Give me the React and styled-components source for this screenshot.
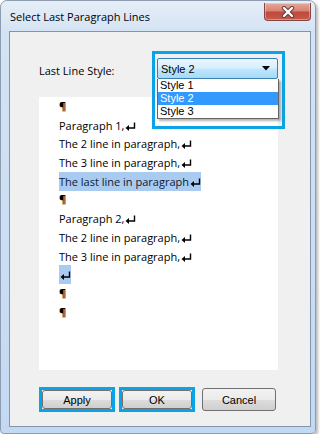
import React from "react";
import styled, { createGlobalStyle } from "styled-components";

const GlobalStyle = createGlobalStyle`
  html, body {
    margin: 0;
    padding: 0;
    background: #ffffff;
  }
`;

const uiFont = `"Open Sans", "Noto Sans", sans-serif`;
const classicFont = `"Liberation Sans", Arial, sans-serif`;

const Window = styled.div`
  box-sizing: border-box;
  width: 316px;
  height: 434px;
  display: flex;
  flex-direction: column;
  border: 1px solid #8d9cb0;
  border-radius: 7px 7px 4px 4px;
  background: linear-gradient(#e6eef8 0, #d4e3f4 30px, #c3d9f2 100%);
  box-shadow: 2px 2px 3px rgba(0, 0, 0, 0.28);
`;

const TitleBar = styled.div`
  height: 30px;
  display: flex;
  align-items: flex-start;
  justify-content: space-between;
  padding: 0 4px 0 9px;
`;

const Title = styled.span`
  font-family: ${uiFont};
  font-size: 11px;
  color: #000;
  line-height: 15px;
  margin-top: 8px;
`;

const CloseButton = styled.div`
  width: 47px;
  height: 18px;
  margin-top: 2px;
  display: flex;
  align-items: center;
  justify-content: center;
  box-sizing: border-box;
  border: 1px solid #83453d;
  border-top: none;
  border-radius: 0 0 4px 4px;
  background: linear-gradient(#e7a89b 0%, #d88574 45%, #c0493d 55%, #c75b4c 100%);
  box-shadow: inset 0 0 0 1px rgba(255, 255, 255, 0.35);
`;

const Client = styled.div`
  flex: 1;
  margin: 0 4px 6px 8px;
  border: 1px solid #8196ae;
  background: #f0f0f0;
  padding: 19px 0 0 29px;
  display: flex;
  flex-direction: column;
`;

const StyleRow = styled.div`
  display: flex;
  height: 30px;
`;

const Label = styled.span`
  width: 113px;
  font-family: ${uiFont};
  font-size: 11px;
  line-height: 15px;
  margin-top: 12px;
  color: #000;
`;

const ComboAnchor = styled.div`
  position: relative;
  width: 133px;
`;

const Callout = styled.div`
  position: absolute;
  top: 0;
  left: 0;
  z-index: 2;
  box-sizing: border-box;
  width: 133px;
  height: 78px;
  border: 3px solid #0aa3e5;
  padding: 4px 4px 0 2px;
`;

const Select = styled.div`
  box-sizing: border-box;
  width: 121px;
  height: 21px;
  display: flex;
  align-items: center;
  justify-content: space-between;
  padding: 0 7px 0 3px;
  border: 1px solid #3c7fb1;
  border-radius: 2px;
  background: linear-gradient(#eaf6fd 0%, #d9f0fc 45%, #bee6fd 55%, #a7d9f5 100%);
  font-family: ${classicFont};
  font-size: 11px;
  color: #000;
`;

const List = styled.div`
  box-sizing: border-box;
  width: 122px;
  border: 1px solid #646464;
  border-top: none;
  background: #fff;
  box-shadow: 2px 2px 2px rgba(0, 0, 0, 0.3);
`;

const Option = styled.div`
  height: 13px;
  line-height: 13px;
  padding-left: 2px;
  font-family: ${classicFont};
  font-size: 11px;
  color: ${(p) => (p.$selected ? "#fff" : "#000")};
  background: ${(p) => (p.$selected ? "#3399ff" : "transparent")};
`;

const Preview = styled.div`
  width: 239px;
  height: 273px;
  margin-top: 16px;
  box-sizing: border-box;
  padding: 0 0 0 20px;
  background: #fff;
  font-family: ${uiFont};
  font-size: 11px;
  color: #000;
`;

const Line = styled.div`
  height: 18.7px;
  line-height: 18.7px;
  white-space: nowrap;
`;

const Mark = styled.span`
  display: inline-block;
  line-height: 19px;
  background: ${(p) => (p.$selected ? "#a9cbef" : "transparent")};
  color: ${(p) => (p.$selected ? "#0d1a33" : "#000")};
`;

const Pilcrow = styled.span`
  font-weight: 700;
  font-size: 11px;
  color: #000;
`;

const ButtonRow = styled.div`
  display: flex;
  gap: 4px;
  margin-top: 17px;
`;

const ButtonSlot = styled.div`
  box-sizing: border-box;
  width: 76px;
  height: 25px;
  border: ${(p) => (p.$focus ? "3px solid #0aa3e5" : "1px solid transparent")};
  margin-left: ${(p) => (p.$gapBefore ? "2px" : "0")};
  display: flex;
`;

const Button = styled.div`
  flex: 1;
  display: flex;
  align-items: center;
  justify-content: center;
  box-sizing: border-box;
  border: 1px solid #707070;
  border-radius: 3px;
  background: linear-gradient(#f2f2f2 0%, #ebebeb 50%, #dddddd 51%, #cfcfcf 100%);
  font-family: ${classicFont};
  font-size: 11px;
  color: #000;
`;

const ReturnArrow = () => (
  <svg width="11" height="9" viewBox="0 0 11 9" style={{ marginLeft: 1, verticalAlign: "-1px" }}>
    <path d="M9.5 0.5 V6 H3" stroke="#000" strokeWidth="1.4" fill="none" />
    <path d="M0.5 6 L4 3 V9 Z" fill="#000" />
  </svg>
);

const CloseGlyph = () => (
  <svg width="14" height="12" viewBox="0 0 14 12">
    <path d="M3 2 L11 10 M11 2 L3 10" stroke="#5a3a36" strokeWidth="4.2" strokeLinecap="round" />
    <path d="M3 2 L11 10 M11 2 L3 10" stroke="#ffffff" strokeWidth="2.4" strokeLinecap="round" />
  </svg>
);

const DropArrow = () => (
  <svg width="8" height="5" viewBox="0 0 8 5">
    <path d="M0 0 H8 L4 4.5 Z" fill="#000" />
  </svg>
);

const lines = [
  { kind: "pilcrow" },
  { text: "Paragraph 1," },
  { text: "The 2 line in paragraph," },
  { text: "The 3 line in paragraph," },
  { text: "The last line in paragraph", selected: true },
  { kind: "pilcrow" },
  { text: "Paragraph 2," },
  { text: "The 2 line in paragraph," },
  { text: "The 3 line in paragraph," },
  { text: "", selected: true },
  { kind: "pilcrow" },
  { kind: "pilcrow" },
];

export default function App() {
  return (
    <>
      <GlobalStyle />
      <Window>
        <TitleBar>
          <Title>Select Last Paragraph Lines</Title>
          <CloseButton>
            <CloseGlyph />
          </CloseButton>
        </TitleBar>
        <Client>
          <StyleRow>
            <Label>Last Line Style:</Label>
            <ComboAnchor>
              <Callout>
                <Select>
                  <span>Style 2</span>
                  <DropArrow />
                </Select>
                <List>
                  <Option>Style 1</Option>
                  <Option $selected>Style 2</Option>
                  <Option>Style 3</Option>
                </List>
              </Callout>
            </ComboAnchor>
          </StyleRow>
          <Preview>
            {lines.map((line, i) => (
              <Line key={i}>
                {line.kind === "pilcrow" ? (
                  <Pilcrow>¶</Pilcrow>
                ) : (
                  <Mark $selected={line.selected}>
                    {line.text}
                    <ReturnArrow />
                  </Mark>
                )}
              </Line>
            ))}
          </Preview>
          <ButtonRow>
            <ButtonSlot $focus>
              <Button>Apply</Button>
            </ButtonSlot>
            <ButtonSlot $focus>
              <Button>OK</Button>
            </ButtonSlot>
            <ButtonSlot $gapBefore>
              <Button>Cancel</Button>
            </ButtonSlot>
          </ButtonRow>
        </Client>
      </Window>
    </>
  );
}
